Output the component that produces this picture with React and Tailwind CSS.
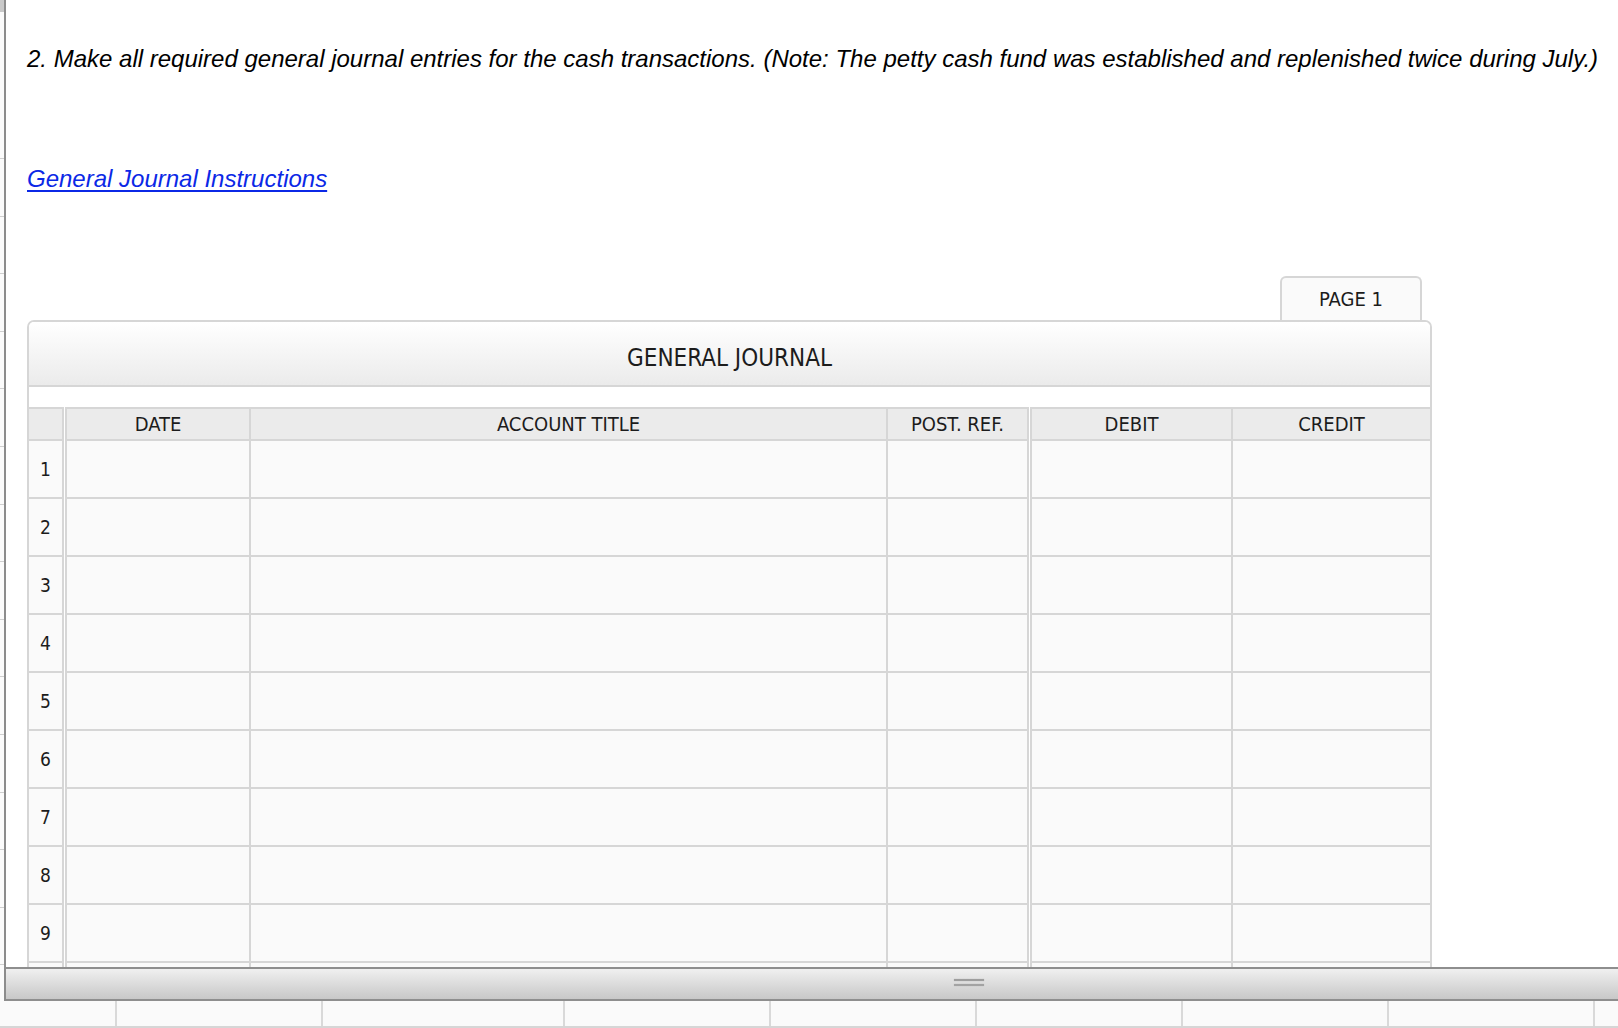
import React from 'react';

const tableFont = { fontFamily: '"Liberation Sans Narrow", "DejaVu Sans Condensed", sans-serif' };

const rows = [1, 2, 3, 4, 5, 6, 7, 8, 9, null];
const ticks = Array.from({ length: 15 }, (_, i) => i);
const bottomCells = ['w-[117px]', 'w-[206px]', 'w-[242px]', 'w-[206px]', 'w-[206px]', 'w-[206px]', 'w-[206px]', 'w-[206px]'];

const HeaderRow = () => (
  <div className="flex h-[34px] text-[20px] text-[#1c1c1c]">
    <div className="w-[35px] border-y-2 border-r-2 border-[#d6d6d6] bg-[#ebebeb]" />
    <div className="w-px bg-white" />
    <div className="flex border-2 border-[#d6d6d6] bg-[#ebebeb]">
      <div className="flex w-[184px] items-center justify-center border-r-2 border-[#d6d6d6]">DATE</div>
      <div className="flex w-[637px] items-center justify-center border-r-2 border-[#d6d6d6]">ACCOUNT TITLE</div>
      <div className="flex w-[139px] items-center justify-center">POST. REF.</div>
    </div>
    <div className="w-px bg-white" />
    <div className="flex flex-1 border-y-2 border-l-2 border-[#d6d6d6] bg-[#ebebeb]">
      <div className="flex w-[201px] items-center justify-center border-r-2 border-[#d6d6d6]">DEBIT</div>
      <div className="flex flex-1 items-center justify-center">CREDIT</div>
    </div>
  </div>
);

const BodyRow = ({ n }) => (
  <div className="flex h-[58px] text-[19px] text-[#1c1c1c]">
    <div className="flex w-[35px] items-center justify-center border-b-2 border-r-2 border-[#d6d6d6] bg-[#fafafa]">{n}</div>
    <div className="w-px bg-white" />
    <div className="flex border-x-2 border-b-2 border-[#d6d6d6] bg-[#fafafa]">
      <div className="w-[184px] border-r-2 border-[#d6d6d6]" />
      <div className="w-[637px] border-r-2 border-[#d6d6d6]" />
      <div className="w-[139px]" />
    </div>
    <div className="w-px bg-white" />
    <div className="flex flex-1 border-b-2 border-l-2 border-[#d6d6d6] bg-[#fafafa]">
      <div className="w-[201px] border-r-2 border-[#d6d6d6]" />
      <div className="flex-1" />
    </div>
  </div>
);

export default function App() {
  return (
    <div className="flex h-[1028px] w-[1618px] flex-col overflow-hidden bg-[#fafafa]">
      <div className="flex h-[1001px]">
        {/* spreadsheet edge behind the frame */}
        <div className="w-[4px] shrink-0 bg-[#fbfbfb]">
          <div className="h-[12px] bg-[#c9c9c9]" />
          <div className="h-[146px]" />
          {ticks.map((t) => (
            <div key={t} className="h-[57.6px] border-t border-[#cfcfcf]" />
          ))}
        </div>

        <div className="flex flex-1 flex-col border-l-2 border-[#8c8c8c] bg-white">
          <div className="h-[967px] overflow-hidden pl-[21px]" style={{ fontFamily: '"Liberation Sans", Arial, sans-serif' }}>
            <p className="mt-[47px] text-[24px] italic leading-[24px] text-black">
              2. Make all required general journal entries for the cash transactions. (Note: The petty cash fund was established and replenished twice during July.)
            </p>
            <a href="#" className="mt-[96px] inline-block text-[24px] italic leading-[24px] text-[#0b28e6] underline decoration-[2px] underline-offset-[3px]">
              General Journal Instructions
            </a>

            <div className="w-[1405px]" style={tableFont}>
              <div className="mt-[82px] flex justify-end pr-[10px]">
                <div className="flex h-[44px] w-[142px] items-center justify-center rounded-t-[6px] border-2 border-b-0 border-[#d6d6d6] bg-[#fafafa] text-[20px] text-[#1c1c1c]">
                  PAGE 1
                </div>
              </div>
              <div className="rounded-t-[7px] border-2 border-b-0 border-[#d6d6d6] bg-white">
                <div className="flex h-[65px] items-center justify-center rounded-t-[5px] border-b-2 border-[#d6d6d6] bg-gradient-to-b from-white to-[#ebebeb] pt-[9px] text-[24px] text-[#1c1c1c]">
                  GENERAL JOURNAL
                </div>
                <div className="h-[20px]" />
                <HeaderRow />
                {rows.map((n, i) => (
                  <BodyRow key={i} n={n} />
                ))}
              </div>
            </div>
          </div>

          <div className="h-[34px] border-y-2 border-[#8e8e8e] bg-gradient-to-b from-[#f0f0f0] to-[#c8c8c8] pl-[948px] pt-[10px]">
            <div className="h-[2px] w-[30px] bg-[#9e9e9e] shadow-[0_0_1px_#9e9e9e]" />
            <div className="mt-[3px] h-[2px] w-[30px] bg-[#a3a3a3] shadow-[0_0_1px_#a3a3a3]" />
          </div>
        </div>
      </div>

      {/* spreadsheet cells below the frame */}
      <div className="flex h-[27px] border-b-2 border-[#d6d6d6] bg-[#fafafa]">
        {bottomCells.map((w, i) => (
          <div key={i} className={`${w} border-r-2 border-[#d9d9d9]`} />
        ))}
        <div className="flex-1" />
      </div>
    </div>
  );
}
